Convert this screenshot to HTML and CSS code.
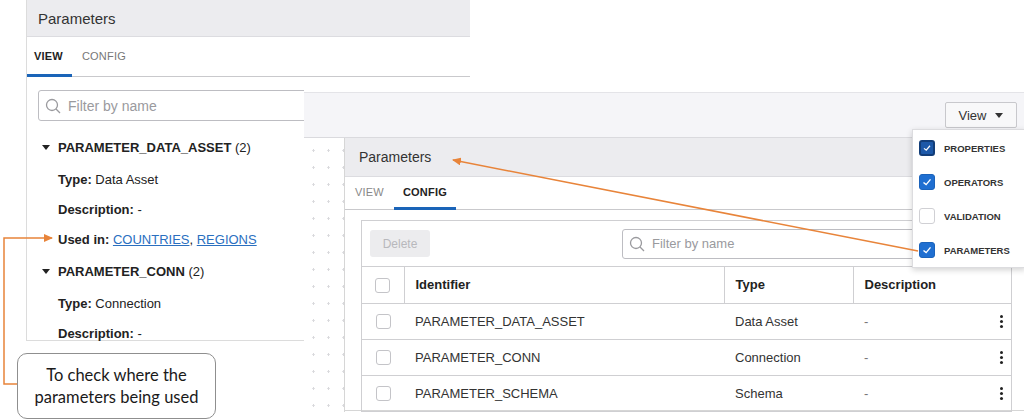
FILE: index.html
```html
<!DOCTYPE html>
<html lang="en">
<head>
  <meta charset="UTF-8" />
  <title>Parameters panel</title>
  <link rel="stylesheet" href="styles.css">
</head>
<body>
<div class="canvas">

  <!-- first screenshot: VIEW tab -->
  <section class="shot shot-view">
    <div class="panel-head">Parameters</div>
    <div class="tabs">
      <div class="tab active">VIEW</div>
      <div class="tab">CONFIG</div>
    </div>
    <div class="view-body">
      <div class="filter filter-wide">
        <svg class="search-icon" viewBox="0 0 16 16"><circle cx="7" cy="7" r="5.5"/><line x1="11" y1="11" x2="15" y2="15"/></svg>
        <span>Filter by name</span>
      </div>
      <ul class="tree">
        <li class="tree-head"><span class="caret"></span><b>PARAMETER_DATA_ASSET</b> (2)</li>
        <li class="tree-row"><b>Type:</b> Data Asset</li>
        <li class="tree-row"><b>Description:</b> -</li>
        <li class="tree-row"><b>Used in:</b> <a href="#">COUNTRIES</a>, <a href="#">REGIONS</a></li>
        <li class="tree-head"><span class="caret"></span><b>PARAMETER_CONN</b> (2)</li>
        <li class="tree-row"><b>Type:</b> Connection</li>
        <li class="tree-row"><b>Description:</b> -</li>
      </ul>
    </div>
  </section>

  <!-- second screenshot: CONFIG tab -->
  <section class="shot shot-config">
    <div class="topbar">
      <button class="view-btn">View <span class="caret"></span></button>
    </div>
    <div class="workspace">
      <div class="dots"></div>
      <div class="config-panel">
        <div class="panel-head">Parameters</div>
        <div class="tabs tabs-small">
          <div class="tab">VIEW</div>
          <div class="tab active">CONFIG</div>
        </div>
        <div class="config-body">
          <div class="card">
            <div class="toolbar">
              <button class="btn-delete">Delete</button>
              <div class="filter filter-table">
                <svg class="search-icon" viewBox="0 0 16 16"><circle cx="7" cy="7" r="5.5"/><line x1="11" y1="11" x2="15" y2="15"/></svg>
                <span>Filter by name</span>
              </div>
            </div>
            <table class="grid">
              <thead>
                <tr>
                  <th class="col-check"><span class="box"></span></th>
                  <th class="col-id">Identifier</th>
                  <th class="col-type">Type</th>
                  <th>Description</th>
                </tr>
              </thead>
              <tbody>
                <tr>
                  <td class="col-check"><span class="box"></span></td>
                  <td>PARAMETER_DATA_ASSET</td>
                  <td>Data Asset</td>
                  <td class="desc"><span>-</span><span class="kebab"></span></td>
                </tr>
                <tr>
                  <td class="col-check"><span class="box"></span></td>
                  <td>PARAMETER_CONN</td>
                  <td>Connection</td>
                  <td class="desc"><span>-</span><span class="kebab"></span></td>
                </tr>
                <tr>
                  <td class="col-check"><span class="box"></span></td>
                  <td>PARAMETER_SCHEMA</td>
                  <td>Schema</td>
                  <td class="desc"><span>-</span><span class="kebab"></span></td>
                </tr>
              </tbody>
            </table>
          </div>
        </div>
      </div>
    </div>
  </section>

  <!-- View dropdown -->
  <div class="menu">
    <label class="menu-item"><span class="check on focus"><svg viewBox="0 0 16 16"><polyline points="4,8.5 7,11 12,5"/></svg></span>PROPERTIES</label>
    <label class="menu-item"><span class="check on"><svg viewBox="0 0 16 16"><polyline points="4,8.5 7,11 12,5"/></svg></span>OPERATORS</label>
    <label class="menu-item"><span class="check"></span>VALIDATION</label>
    <label class="menu-item"><span class="check on"><svg viewBox="0 0 16 16"><polyline points="4,8.5 7,11 12,5"/></svg></span>PARAMETERS</label>
  </div>

  <!-- annotations -->
  <svg class="annotations" viewBox="0 0 1024 420">
    <defs>
      <marker id="head" markerWidth="9" markerHeight="8" refX="8" refY="4" orient="auto" markerUnits="userSpaceOnUse">
        <path d="M0,0 L9,4 L0,8 z" fill="#e8843a"/>
      </marker>
    </defs>
    <polyline points="17,384 4,384 4,238 52,238" marker-end="url(#head)"/>
    <line x1="918" y1="251" x2="453" y2="160" marker-end="url(#head)"/>
  </svg>

  <div class="callout">To check where the<br>parameters being used</div>

</div>
</body>
</html>
```

FILE: styles.css
```css
body {
  margin: 0;
  background: #fff;
  font-family: "Liberation Sans", Arial, sans-serif;
  color: #222;
}
.canvas {
  position: relative;
  width: 1024px;
  height: 420px;
  overflow: hidden;
}
.shot {
  position: absolute;
  background: #fff;
  box-sizing: border-box;
}

/* shared panel bits */
.panel-head {
  display: flex;
  align-items: center;
  background: #ececef;
  border-bottom: 1px solid #dcdce0;
  color: #333;
  box-sizing: border-box;
}
.tabs {
  display: flex;
  border-bottom: 1px solid #c9c9cc;
  box-sizing: border-box;
}
.tab {
  display: flex;
  align-items: center;
  font-size: 11px;
  letter-spacing: 0.2px;
  color: #777;
  border-bottom: 3px solid transparent;
  margin-bottom: -1px;
}
.tab.active {
  color: #222;
  font-weight: bold;
  border-bottom-color: #1a64b8;
}
.filter {
  display: flex;
  align-items: center;
  border: 1px solid #bdbdc2;
  border-radius: 3px;
  background: #fff;
  box-sizing: border-box;
  color: #9a9a9e;
  font-size: 14px;
}
.search-icon {
  width: 16px;
  height: 16px;
  fill: none;
  stroke: #9a9a9e;
  stroke-width: 1.3;
  margin: 0 7px 0 6px;
}

/* first shot */
.shot-view {
  left: 26px;
  top: 0;
  width: 444px;
  height: 341px;
  border-left: 1px solid #dcdcdc;
  border-bottom: 1px solid #dcdcdc;
}
.shot-view .panel-head {
  height: 37px;
  padding-left: 11px;
  font-size: 15px;
}
.shot-view .tabs {
  height: 40px;
}
.shot-view .tab {
  padding: 0 9px 0 7px;
}
.shot-view .tab + .tab {
  padding-left: 10px;
}
.view-body {
  padding: 13px 0 0 11px;
}
.filter-wide {
  width: 320px;
  height: 31px;
}
.tree {
  list-style: none;
  margin: 10px 0 0;
  padding: 0;
  font-size: 13px;
}
.tree li {
  height: 30px;
  line-height: 30px;
  white-space: nowrap;
}
.tree .tree-head {
  height: 34px;
  line-height: 34px;
  padding-left: 4px;
}
.tree .tree-row {
  padding-left: 20px;
}
.tree .caret {
  display: inline-block;
  vertical-align: middle;
  width: 0;
  height: 0;
  border-left: 4px solid transparent;
  border-right: 4px solid transparent;
  border-top: 5px solid #222;
  margin: -2px 8px 0 0;
}
.tree a {
  color: #2a6fbf;
}

/* second shot */
.shot-config {
  left: 304px;
  top: 88px;
  width: 720px;
  height: 323px;
  padding-top: 4px;
  border-bottom: 1px solid #d6d6d6;
  display: flex;
  flex-direction: column;
}
.topbar {
  height: 46px;
  flex: none;
  background: #f5f5f8;
  border-top: 1px solid #e4e4e8;
  border-bottom: 1px solid #dadade;
  display: flex;
  justify-content: flex-end;
  align-items: center;
  padding-right: 7px;
  box-sizing: border-box;
}
.view-btn {
  width: 72px;
  height: 26px;
  border: 1px solid #c8c8cc;
  border-radius: 2px;
  background: #f8f8f9;
  font: 13px "Liberation Sans", Arial, sans-serif;
  color: #333;
  display: flex;
  align-items: center;
  justify-content: center;
  gap: 9px;
  padding: 0;
}
.view-btn .caret {
  width: 0;
  height: 0;
  border-left: 4px solid transparent;
  border-right: 4px solid transparent;
  border-top: 5px solid #333;
}
.workspace {
  flex: 1;
  display: flex;
}
.dots {
  width: 40px;
  background-color: #fff;
  background-image: radial-gradient(#d9d9dc 0.9px, transparent 1.3px);
  background-size: 15px 17px;
  background-position: 2px 4px;
}
.config-panel {
  flex: 1;
  border-left: 1px solid #d6d6d6;
  display: flex;
  flex-direction: column;
}
.config-panel .panel-head {
  height: 39px;
  padding-left: 14px;
  font-size: 14px;
}
.tabs-small {
  height: 33px;
}
.tabs-small .tab {
  padding: 0 10px;
  color: #888;
}
.tabs-small .tab.active {
  color: #222;
  padding: 0 9px 0 9px;
}
.config-body {
  padding: 10px 12px 0 16px;
}
.card {
  border: 1px solid #cfcfd2;
  border-bottom: none;
}
.toolbar {
  height: 45px;
  display: flex;
  align-items: center;
  padding-left: 8px;
  border-bottom: 1px solid #cfcfd2;
}
.btn-delete {
  width: 60px;
  height: 27px;
  border: none;
  border-radius: 3px;
  background: #ececee;
  color: #b8b8bc;
  font: 12px "Liberation Sans", Arial, sans-serif;
}
.filter-table {
  margin-left: 192px;
  width: 370px;
  height: 30px;
  font-size: 13px;
}
.grid {
  width: 100%;
  border-collapse: collapse;
  font-size: 13px;
  color: #333;
}
.grid th,
.grid td {
  height: 36px;
  padding: 0 0 0 11px;
  text-align: left;
  border-bottom: 1px solid #cfcfd2;
  box-sizing: border-box;
}
.grid th {
  font-weight: bold;
  color: #222;
  border-right: 1px solid #cfcfd2;
}
.grid th:last-child {
  border-right: none;
}
.grid .col-check {
  width: 42px;
  padding: 0;
  text-align: center;
}
.grid .col-id {
  width: 320px;
}
.grid .col-type {
  width: 129px;
}
.box {
  display: inline-block;
  width: 13px;
  height: 13px;
  border: 1px solid #c4c4c8;
  border-radius: 3px;
  vertical-align: middle;
}
.grid .desc {
  position: relative;
  color: #777;
}
.kebab {
  position: absolute;
  right: 8px;
  top: 11px;
  width: 3px;
  height: 3px;
  background: #222;
  border-radius: 50%;
  box-shadow: 0 5px 0 #222, 0 10px 0 #222;
}

/* dropdown menu */
.menu {
  position: absolute;
  left: 912px;
  top: 129px;
  width: 114px;
  height: 139px;
  box-sizing: border-box;
  padding-top: 1px;
  background: #fff;
  border: 1px solid #dcdcdf;
  box-shadow: 0 2px 6px rgba(0, 0, 0, 0.18);
}
.menu-item {
  display: flex;
  align-items: center;
  height: 34px;
  padding-left: 6px;
  font-size: 9.5px;
  font-weight: bold;
  color: #333;
}
.check {
  width: 16px;
  height: 16px;
  box-sizing: border-box;
  border: 1px solid #d0d0d4;
  border-radius: 3px;
  margin-right: 9px;
  background: #fff;
}
.check.on {
  background: #1f6fd1;
  border-color: #1b63bb;
}
.check.focus {
  background: #1c58a8;
  border: 2px solid #123d78;
}
.check svg {
  display: block;
  width: 100%;
  height: 100%;
  fill: none;
  stroke: #fff;
  stroke-width: 1.6;
}

/* annotations */
.annotations {
  position: absolute;
  left: 0;
  top: 0;
  width: 1024px;
  height: 420px;
  pointer-events: none;
}
.annotations polyline,
.annotations line {
  fill: none;
  stroke: #e8843a;
  stroke-width: 1.5;
}
.callout {
  position: absolute;
  left: 17px;
  top: 353px;
  width: 199px;
  height: 66px;
  box-sizing: border-box;
  border: 1.5px solid #8f8f8f;
  border-radius: 10px;
  background: #fff;
  display: flex;
  align-items: center;
  justify-content: center;
  text-align: center;
  font-family: Lato, "Open Sans", sans-serif;
  font-size: 16.5px;
  line-height: 22px;
  color: #1a1a1a;
}
```
